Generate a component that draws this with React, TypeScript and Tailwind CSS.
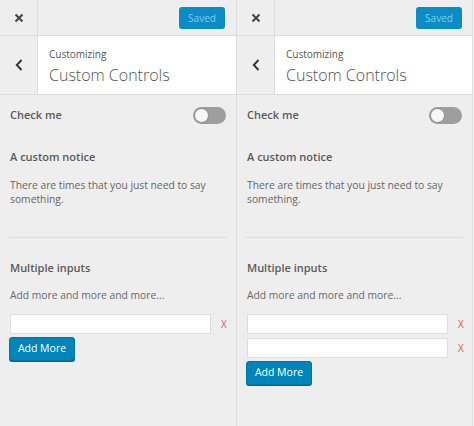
import { useState } from 'react';

function CloseIcon() {
  return (
    <svg width="10" height="10" viewBox="0 0 10 10" className="text-[#444]">
      <path d="M1.5 1.5 L8.5 8.5 M8.5 1.5 L1.5 8.5" stroke="currentColor" strokeWidth="2" fill="none" />
    </svg>
  );
}

function BackIcon() {
  return (
    <svg width="8" height="12" viewBox="0 0 8 12" className="text-[#333]">
      <path d="M6.5 1 L1.8 6 L6.5 11" stroke="currentColor" strokeWidth="1.9" fill="none" />
    </svg>
  );
}

function Toggle() {
  return (
    <div className="w-[33px] h-[17px] rounded-full bg-[#9e9e9e] flex items-center p-[1px]">
      <div className="w-[15px] h-[15px] rounded-full bg-[#f7f7f7] border border-[#8a8a8a]" />
    </div>
  );
}

function InputRow() {
  return (
    <div className="flex items-center">
      <input
        type="text"
        className="w-[201px] h-[20px] bg-white border border-[#ddd] outline-none"
      />
      <span className="ml-[10px] text-[10px] text-[#e05555]">X</span>
    </div>
  );
}

function Panel({ rows, last }: { rows: number; last?: boolean }) {
  const [list] = useState(() => Array.from({ length: rows }, (_, i) => i));

  return (
    <div className={`${last ? 'w-[236px]' : 'w-[237px]'} h-[426px] flex flex-col border-r border-[#ddd] bg-[#eee] font-['Open_Sans',sans-serif]`}>
      {/* Top bar */}
      <div className="h-[36px] flex items-center border-b border-[#ddd]">
        <div className="w-[38px] h-full flex items-center justify-center border-r border-[#ddd]">
          <CloseIcon />
        </div>
        <div className={`flex-1 flex justify-end ${last ? 'pr-[10px]' : 'pr-[11px]'}`}>
          <button
            type="button"
            className="w-[46px] h-[22px] rounded-[3px] bg-[#0a8cc6] text-[10px] text-[#86cbea] leading-none"
          >
            Saved
          </button>
        </div>
      </div>

      {/* Section header */}
      <div className="h-[59px] flex border-b border-[#ddd]">
        <div className="w-[38px] flex items-center justify-center border-r border-[#ddd] bg-[#eee]">
          <BackIcon />
        </div>
        <div className="flex-1 bg-white pl-[11px] pt-[11px]">
          <div className="text-[10px] leading-[14px] text-[#555]">Customizing</div>
          <div className="mt-[4px] text-[16px] leading-[20px] font-light text-[#555]">Custom Controls</div>
        </div>
      </div>

      {/* Controls */}
      <div className="px-[10px]">
        <div className="h-[40px] flex items-center justify-between">
          <span className="text-[11px] font-semibold text-[#5a5a5a]">Check me</span>
          <Toggle />
        </div>

        <div className="mt-[14px] text-[11px] leading-[16px] font-semibold text-[#5a5a5a]">A custom notice</div>
        <p className="mt-[13px] text-[10.3px] leading-[14px] text-[#666]">
          There are times that you just need to say something.
        </p>

        <div className="mt-[31px] -mx-[1px] border-t border-[#ddd]" />

        <div className="mt-[22px] text-[11px] leading-[16px] font-semibold text-[#5a5a5a]">Multiple inputs</div>
        <div className="mt-[12px] text-[10.3px] leading-[14px] text-[#6a6a6a]">Add more and more and more...</div>

        <div className="mt-[12px] flex flex-col gap-[4px]">
          {list.map(i => (
            <InputRow key={i} />
          ))}
        </div>
        <button
          type="button"
          className="mt-[3px] -ml-[1px] h-[24px] w-[66px] rounded-[3px] bg-[#0085ba] border border-[#0073aa] shadow-[0_1px_0_#006799] text-[10.5px] text-white"
        >
          Add More
        </button>
      </div>
    </div>
  );
}

export default function App() {
  return (
    <div className="w-[474px] h-[426px] flex bg-[#f4f4f4] overflow-hidden">
      <Panel rows={1} />
      <Panel rows={2} last />
    </div>
  );
}
